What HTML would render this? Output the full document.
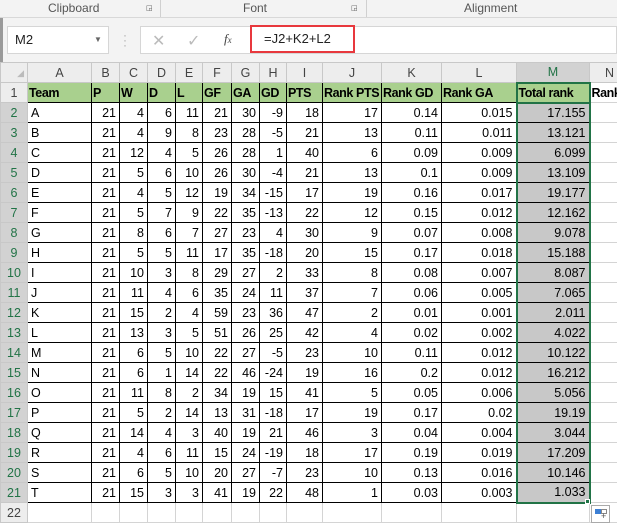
<!DOCTYPE html>
<html><head><meta charset="utf-8"><style>
*{margin:0;padding:0;box-sizing:border-box}
body{width:617px;height:527px;overflow:hidden;background:#fff;font-family:"Liberation Sans",Arial,sans-serif;position:relative}
.abs{position:absolute}
table{position:absolute;left:0;top:62px;width:629px;border-collapse:collapse;table-layout:fixed;font-size:12.5px}
td{height:20px;padding:0 3px;white-space:nowrap;overflow:hidden;border:1px solid #d4d4d4;text-align:right;color:#000;line-height:18px}
td.h{background:#ededed;color:#444;text-align:center;border-color:#c8c8c8;font-size:12.5px}
td.rh{background:#ededed;color:#444;text-align:center;border-color:#c8c8c8;padding:0}
td.rs{background:#d2d2d2;color:#217346}
td.ms{background:#d2d2d2;color:#217346;border-bottom:2px solid #217346}
td.g{background:#a9d08e;font-weight:bold;text-align:left;border:1px solid #000;padding:0 1px;letter-spacing:-0.4px}
td.d{border:1px solid #000}
td.l{text-align:left}
td.m{background:#c8c8c8;border:1px solid #000}
</style></head><body>
<div class="abs" style="left:0;top:0;width:617px;height:62px;background:#f3f3f3"></div>
<div class="abs" style="left:0;top:0;width:3px;height:62px;background:#9a9a9a"></div>
<div class="abs" style="left:0;top:0;width:617px;height:18px;background:#f3f3f3;border-bottom:1px solid #d8d8d8;font-size:12px;color:#555">
<span class="abs" style="left:48px;top:1px">Clipboard</span>
<span class="abs" style="left:146px;top:4px;font-size:7px">◲</span>
<div class="abs" style="left:160px;top:0;width:1px;height:17px;background:#d0d0d0"></div>
<span class="abs" style="left:243px;top:1px">Font</span>
<span class="abs" style="left:351px;top:4px;font-size:7px">◲</span>
<div class="abs" style="left:366px;top:0;width:1px;height:17px;background:#d0d0d0"></div>
<span class="abs" style="left:464px;top:1px">Alignment</span>
</div>
<div class="abs" style="left:7px;top:26px;width:102px;height:28px;background:#fff;border:1px solid #d6d6d6;font-size:13px;line-height:26px;padding-left:7px;color:#222">M2<span class="abs" style="left:86px;top:0;font-size:8px;color:#666">▼</span></div>
<div class="abs" style="left:123px;top:33px;color:#aaa;font-size:12px;line-height:5px">·<br>·<br>·</div>
<div class="abs" style="left:140px;top:26px;width:477px;height:28px;background:#fff;border:1px solid #d6d6d6"></div>
<span class="abs" style="left:152px;top:31px;color:#bbb;font-size:16px">✕</span>
<span class="abs" style="left:187px;top:31px;color:#bbb;font-size:16px">✓</span>
<span class="abs" style="left:224px;top:31px;color:#444;font-size:13px;font-style:italic;font-family:'Liberation Serif',serif">f<span style="font-size:9px">x</span></span>
<div class="abs" style="left:250px;top:25px;width:105px;height:28px;border:2px solid #e8383d"></div>
<span class="abs" style="left:264px;top:31px;font-size:13px;color:#222">=J2+K2+L2</span>
<table>
<colgroup><col style="width:27px"><col style="width:64px"><col style="width:28px"><col style="width:28px"><col style="width:28px"><col style="width:27px"><col style="width:29px"><col style="width:28px"><col style="width:27px"><col style="width:36px"><col style="width:59px"><col style="width:60px"><col style="width:75px"><col style="width:73px"><col style="width:40px"></colgroup>
<tr><td class="h" style="background:#ededed;font-size:9px;color:#bbb;text-align:right">◢</td><td class="h">A</td><td class="h">B</td><td class="h">C</td><td class="h">D</td><td class="h">E</td><td class="h">F</td><td class="h">G</td><td class="h">H</td><td class="h">I</td><td class="h">J</td><td class="h">K</td><td class="h">L</td><td class="h ms">M</td><td class="h">N</td></tr>
<tr><td class="rh">1</td><td class="g">Team</td><td class="g">P</td><td class="g">W</td><td class="g">D</td><td class="g">L</td><td class="g">GF</td><td class="g">GA</td><td class="g">GD</td><td class="g">PTS</td><td class="g">Rank PTS</td><td class="g">Rank GD</td><td class="g">Rank GA</td><td class="g" style="border:2px solid #217346">Total rank</td><td class="g" style="background:#fff;border:none">Rank</td></tr>
<tbody id="b"></tbody>
<tr><td class="rh">22</td><td></td><td></td><td></td><td></td><td></td><td></td><td></td><td></td><td></td><td></td><td></td><td></td><td></td><td></td></tr>
</table>
<script>
var d=`A 21 4 6 11 21 30 -9 18 17 0.14 0.015 17.155
B 21 4 9 8 23 28 -5 21 13 0.11 0.011 13.121
C 21 12 4 5 26 28 1 40 6 0.09 0.009 6.099
D 21 5 6 10 26 30 -4 21 13 0.1 0.009 13.109
E 21 4 5 12 19 34 -15 17 19 0.16 0.017 19.177
F 21 5 7 9 22 35 -13 22 12 0.15 0.012 12.162
G 21 8 6 7 27 23 4 30 9 0.07 0.008 9.078
H 21 5 5 11 17 35 -18 20 15 0.17 0.018 15.188
I 21 10 3 8 29 27 2 33 8 0.08 0.007 8.087
J 21 11 4 6 35 24 11 37 7 0.06 0.005 7.065
K 21 15 2 4 59 23 36 47 2 0.01 0.001 2.011
L 21 13 3 5 51 26 25 42 4 0.02 0.002 4.022
M 21 6 5 10 22 27 -5 23 10 0.11 0.012 10.122
N 21 6 1 14 22 46 -24 19 16 0.2 0.012 16.212
O 21 11 8 2 34 19 15 41 5 0.05 0.006 5.056
P 21 5 2 14 13 31 -18 17 19 0.17 0.02 19.19
Q 21 14 4 3 40 19 21 46 3 0.04 0.004 3.044
R 21 4 6 11 15 24 -19 18 17 0.19 0.019 17.209
S 21 6 5 10 20 27 -7 23 10 0.13 0.016 10.146
T 21 15 3 3 41 19 22 48 1 0.03 0.003 1.033`.split('\n');
var h='';d.forEach(function(r,i){var c=r.split(' ');h+='<tr><td class="rh rs">'+(i+2)+'</td>';c.forEach(function(v,j){var cl='d';if(j==0)cl+=' l';if(j==12)cl='m';var st=j==12?' style="border-left:2px solid #217346;border-right:2px solid #217346'+(i==19?';border-bottom:2px solid #217346':'')+'"':'';h+='<td class="'+cl+'"'+st+'>'+v+'</td>'});h+='<td></td></tr>'});
document.getElementById('b').innerHTML=h;
</script>
<div class="abs" style="left:585px;top:499px;width:5px;height:5px;background:#217346;border:1px solid #fff"></div>
<div class="abs" style="left:591px;top:505px;width:19px;height:18px;border:1px solid #aaa;background:#fff"><div class="abs" style="left:3px;top:3px;width:6px;height:5px;background:#3c7fd4"></div><div class="abs" style="left:9px;top:3px;width:6px;height:5px;border:1px solid #888"></div><span class="abs" style="left:9px;top:5px;font-size:9px;color:#555">+</span></div>
</body></html>
